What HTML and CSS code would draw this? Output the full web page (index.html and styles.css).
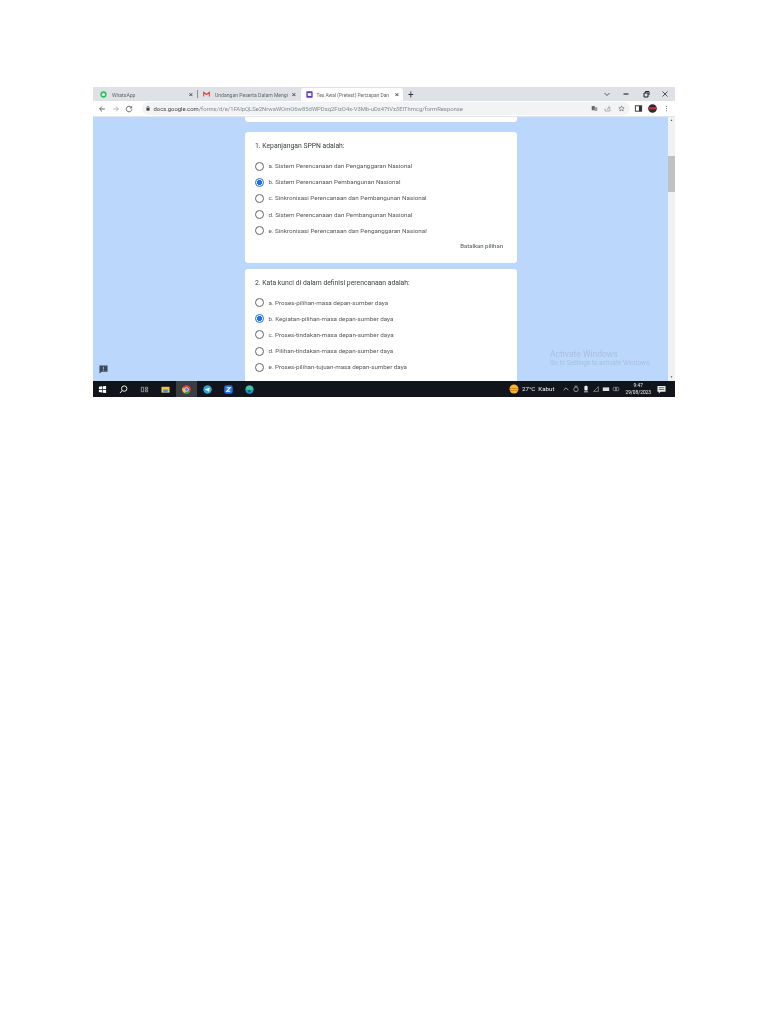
FILE: index.html
```html
<!DOCTYPE html>
<html>
<head>
	<meta charset="utf-8">
	<title>Tes Awal (Pretest) Perizapan Dan</title>
	<link rel="stylesheet" href="styles.css">
</head>
<body>
	<div class="shot">

		<!-- tab strip -->
		<div class="tabstrip">
			<div class="tab">
				<svg class="tab-icon" viewBox="0 0 10 10"><circle cx="5" cy="5" r="4.5" fill="#25c25a"/><circle cx="5" cy="5" r="2.2" fill="#fff"/></svg>
				<span class="tab-title">WhatsApp</span>
				<span class="tab-close">×</span>
			</div>
			<div class="tab-sep"></div>
			<div class="tab">
				<svg class="tab-icon" viewBox="0 0 10 10"><path d="M1 8V2l4 3 4-3v6" fill="none" stroke="#d9453a" stroke-width="1.6"/></svg>
				<span class="tab-title">Undangan Peserta Dalam Mengi</span>
				<span class="tab-close">×</span>
			</div>
			<div class="tab tab-active">
				<svg class="tab-icon" viewBox="0 0 10 10"><rect x="0.5" y="0.5" width="9" height="9" rx="1" fill="#673ab7"/><rect x="2.5" y="3" width="5" height="4" fill="#fff"/></svg>
				<span class="tab-title">Tes Awal (Pretest) Perizapan Dan</span>
				<span class="tab-close">×</span>
			</div>
			<span class="tab-new">+</span>
			<div class="win-controls">
				<svg viewBox="0 0 10 10"><path d="M2.5 4l2.5 2.5L7.500 4" fill="none" stroke="#555" stroke-width="1"/></svg>
				<svg viewBox="0 0 10 10"><path d="M2.500 5h5" stroke="#333" stroke-width="1.200"/></svg>
				<svg viewBox="0 0 10 10"><path d="M3 4h4v4H3zM4.500 4V2.500h3.500V6" fill="none" stroke="#222" stroke-width="1"/></svg>
				<svg viewBox="0 0 10 10"><path d="M2.500 2.500l5 5M7.500 2.500l-5 5" stroke="#444" stroke-width="0.900"/></svg>
			</div>
		</div>

		<!-- toolbar -->
		<div class="toolbar">
			<svg class="nav-icon" viewBox="0 0 10 10"><path d="M8.500 5H2M5 2L2 5l3 3" fill="none" stroke="#555" stroke-width="1.100"/></svg>
			<svg class="nav-icon" viewBox="0 0 10 10"><path d="M1.500 5H8M5 2l3 3-3 3" fill="none" stroke="#aaa" stroke-width="1.100"/></svg>
			<svg class="nav-icon" viewBox="0 0 10 10"><path d="M8 3.200A3.500 3.500 0 1 0 8.500 5.500M8.300 1.500v2.200H6" fill="none" stroke="#555" stroke-width="1.100"/></svg>
			<div class="omnibox">
				<svg class="lock" viewBox="0 0 6 8"><rect x="0.500" y="3" width="5" height="4.500" fill="#444"/><path d="M1.500 3V2a1.500 1.500 0 0 1 3 0v1" fill="none" stroke="#444"/></svg>
				<span class="url"><span class="url-host">docs.google.com</span>/forms/d/e/1FAIpQLSe2NrwaWOmO6w85dWPDsq2FizO4x-V3Mb-uDz47tVz3EIThmcg/formResponse</span>
				<div class="omni-icons">
					<svg viewBox="0 0 10 10"><rect x="1" y="1.500" width="4.500" height="6" fill="#666"/><rect x="5" y="3" width="4" height="5.500" fill="#9aa0a6"/></svg>
					<svg viewBox="0 0 10 10"><path d="M1.500 5v3.500h7V5M5 6.500c0-2 1-3 3-3M6.500 1.500l2 2-2 2" fill="none" stroke="#777" stroke-width="0.800"/></svg>
					<svg viewBox="0 0 10 10"><path d="M5 1.200l1.100 2.500 2.700.3-2 1.800.6 2.700L5 7.100 2.600 8.500l.6-2.700-2-1.800 2.700-.3z" fill="none" stroke="#555" stroke-width="0.800"/></svg>
				</div>
			</div>
			<div class="tool-icons">
				<svg viewBox="0 0 10 10"><rect x="1.500" y="2" width="7" height="6" fill="none" stroke="#333" stroke-width="1"/><rect x="5.500" y="2" width="3" height="6" fill="#333"/></svg>
				<svg viewBox="0 0 10 10"><circle cx="5" cy="5" r="4.800" fill="#2a2c33"/><rect x="0.500" y="3.500" width="9" height="2.500" fill="#c62f3b"/></svg>
				<svg viewBox="0 0 10 10"><circle cx="5" cy="2.500" r="0.600" fill="#555"/><circle cx="5" cy="5" r="0.600" fill="#555"/><circle cx="5" cy="7.500" r="0.600" fill="#555"/></svg>
			</div>
		</div>

		<!-- form page -->
		<div class="viewport">
			<div class="page">
				<div class="form">
					<div class="card card-stub"></div>

					<div class="card card-first">
						<div class="question">1. Kepanjangan SPPN adalah:</div>
						<div class="options">
							<div class="option"><span class="radio"></span>a. Sistem Perencanaan dan Penganggaran Nasional</div>
							<div class="option"><span class="radio radio-on"></span>b. Sistem Perencanaan Pembangunan Nasional</div>
							<div class="option"><span class="radio"></span>c. Sinkronisasi Perencanaan dan Pembangunan Nasional</div>
							<div class="option"><span class="radio"></span>d. Sistem Perencanaan dan Pembangunan Nasional</div>
							<div class="option"><span class="radio"></span>e. Sinkronisasi Perencanaan dan Penganggaran Nasional</div>
						</div>
						<div class="clear">Batalkan pilihan</div>
					</div>

					<div class="card card-second">
						<div class="question">2. Kata kunci di dalam definisi perencanaan adalah:</div>
						<div class="options">
							<div class="option"><span class="radio"></span>a. Proses-pilihan-masa depan-sumber daya</div>
							<div class="option"><span class="radio radio-on"></span>b. Kegiatan-pilihan-masa depan-sumber daya</div>
							<div class="option"><span class="radio"></span>c. Proses-tindakan-masa depan-sumber daya</div>
							<div class="option"><span class="radio"></span>d. Pilihan-tindakan-masa depan-sumber daya</div>
							<div class="option"><span class="radio"></span>e. Proses-pilihan-tujuan-masa depan-sumber daya</div>
						</div>
					</div>
				</div>

				<svg class="feedback" viewBox="0 0 10 10"><path d="M0.500 0.500h9v7H3L0.500 9.500z" fill="#3f4a5a"/><path d="M5 2v3M5 5.800v.8" stroke="#bbd7fb" stroke-width="0.800"/></svg>
				<div class="watermark">
					<div class="watermark-title">Activate Windows</div>
					<div class="watermark-sub">Go to Settings to activate Windows.</div>
				</div>
			</div>
			<div class="scrollbar">
				<span class="scroll-arrow">▲</span>
				<div class="scroll-thumb"></div>
				<span class="scroll-arrow">▼</span>
			</div>
		</div>

		<!-- windows taskbar -->
		<div class="taskbar">
			<div class="task-left">
				<svg class="task-icon" viewBox="0 0 10 10"><path d="M1 2l3.500-.5v3H1zM5.200 1.400L9 1v3.500H5.200zM1 5.300h3.500v3L1 7.900zM5.200 5.300H9V9l-3.800-.5z" fill="#fff"/></svg>
				<svg class="task-icon" viewBox="0 0 10 10"><circle cx="5.800" cy="4" r="3" fill="none" stroke="#fff" stroke-width="1"/><path d="M3.600 6.200L1 9" stroke="#fff" stroke-width="1"/></svg>
				<svg class="task-icon" viewBox="0 0 10 10"><path d="M1.500 2.500h2.500v5H1.500zM6 2.500h2.500v2H6zM6 5.500h2.500v2H6z" fill="none" stroke="#ccc" stroke-width="0.700"/></svg>
				<svg class="task-icon" viewBox="0 0 10 10"><rect x="0.500" y="2" width="9" height="6.500" fill="#f5c344"/><rect x="2.500" y="5" width="5" height="3.500" fill="#3c8fd6"/></svg>
				<span class="task-active">
					<svg class="task-icon" viewBox="0 0 10 10"><circle cx="5" cy="5" r="4.700" fill="#e0453a"/><path d="M5 5L9 7.500A4.700 4.700 0 0 1 3 9.300z" fill="#2fa44f"/><path d="M5 5L3 9.300A4.700 4.700 0 0 1 .8 2.800z" fill="#f3c02e"/><circle cx="5" cy="5" r="2.100" fill="#3f83e8" stroke="#fff" stroke-width="0.700"/></svg>
				</span>
				<svg class="task-icon" viewBox="0 0 10 10"><circle cx="5" cy="5" r="4.700" fill="#2ea3dc"/><path d="M2 5l5.500-2.200L6.700 7.500 4.500 6z" fill="#fff"/></svg>
				<svg class="task-icon" viewBox="0 0 10 10"><rect x="0.300" y="0.300" width="9.400" height="9.400" rx="2.500" fill="#2470e8"/><path d="M3 3h4L3 7h4" fill="none" stroke="#fff" stroke-width="1.200"/></svg>
				<svg class="task-icon" viewBox="0 0 10 10"><circle cx="5" cy="5" r="4.700" fill="#1f8fd0"/><path d="M1 5a4 4 0 0 1 8-.5C9 6 6 6 5 5.500 3.500 5 2 5 1 5z" fill="#3ecb8e"/><circle cx="4.800" cy="6.800" r="1.500" fill="#0e4f8f"/></svg>
			</div>
			<div class="task-right">
				<svg class="weather" viewBox="0 0 10 10"><circle cx="5" cy="5" r="4.500" fill="#f6b52c"/><path d="M1 4.500h8M1 6.500h8" stroke="#d9791c" stroke-width="0.800"/></svg>
				<span class="weather-text">27°C&nbsp; Kabut</span>
				<div class="tray">
					<svg viewBox="0 0 10 10"><path d="M2 6.500L5 3.500l3 3" fill="none" stroke="#ddd" stroke-width="0.900"/></svg>
					<svg viewBox="0 0 10 10"><circle cx="5" cy="5.500" r="2.800" fill="none" stroke="#ccc" stroke-width="0.800"/><path d="M3 1.500h4" stroke="#ccc" stroke-width="0.800"/></svg>
					<svg viewBox="0 0 10 10"><rect x="3" y="1" width="4" height="6" rx="1.500" fill="#eee"/><path d="M2.500 8.500h5" stroke="#eee"/></svg>
					<svg viewBox="0 0 10 10"><path d="M2 8h6V2z" fill="none" stroke="#aaa" stroke-width="0.800"/></svg>
					<svg viewBox="0 0 10 10"><rect x="1" y="3" width="8" height="4.500" fill="#ddd"/></svg>
					<svg viewBox="0 0 10 10"><circle cx="3.500" cy="5" r="2.300" fill="none" stroke="#bbb" stroke-width="0.700"/><circle cx="6.500" cy="5" r="2.300" fill="none" stroke="#bbb" stroke-width="0.700"/></svg>
				</div>
				<div class="clock">
					<div>9:47</div>
					<div>29/08/2023</div>
				</div>
				<svg class="notify" viewBox="0 0 10 10"><path d="M0.500 1h9v6.500H4L2 9.500v-2H0.500z" fill="#e8e8e8"/><path d="M2 3h6M2 5h6" stroke="#333" stroke-width="0.700"/></svg>
			</div>
		</div>
	</div>
</body>
</html>
```

FILE: styles.css
```css
html, body {
	margin: 0;
	background: #fff;
}

body {
	padding: 87px 93px 0 93px;
	height: 1024px;
	box-sizing: border-box;
	font-family: "Roboto", "Liberation Sans", sans-serif;
}

/* the whole picture is a scaled down screenshot, so everything is a bit soft */
.shot {
	width: 582px;
	height: 310px;
	display: flex;
	flex-direction: column;
	filter: blur(0.55px);
	overflow: hidden;
}

/* tab strip */
.tabstrip {
	height: 14px;
	background: #dee1e6;
	display: flex;
	align-items: flex-end;
	padding-left: 2px;
	font-size: 5.100px;
	color: #666;
}

.tab {
	width: 102px;
	height: 13px;
	display: flex;
	align-items: center;
	padding: 0 4px 0 5px;
	box-sizing: border-box;
	gap: 5px;
	border-radius: 3px 3px 0 0;
}

.tab-active {
	background: #fff;
	margin-left: 1px;
	gap: 3.500px;
	font-size: 4.900px;
}

.tab-icon {
	width: 7px;
	height: 7px;
	flex: none;
}

.tab-title {
	flex: 1;
	min-width: 0;
	white-space: nowrap;
}

.tab-close {
	font-size: 8px;
	color: #444;
	line-height: 1;
}

.tab-sep {
	width: 1px;
	height: 8px;
	background: #8a8d93;
	align-self: center;
	flex: none;
}

.tab-new {
	margin-left: 5px;
	font-size: 10px;
	line-height: 13px;
	color: #333;
}

.win-controls {
	margin-left: auto;
	display: flex;
	align-items: center;
	height: 14px;
	gap: 9.500px;
	padding-right: 5px;
}

.win-controls svg {
	width: 10px;
	height: 10px;
}

/* toolbar */
.toolbar {
	height: 16px;
	background: #fff;
	display: flex;
	align-items: center;
	padding-left: 5px;
	box-sizing: border-box;
	border-bottom: 1px solid #e3e5e8;
}

.nav-icon {
	width: 8px;
	height: 8px;
	margin-right: 5.500px;
	flex: none;
}

.omnibox {
	margin-left: 3px;
	width: 488px;
	height: 13px;
	border-radius: 7px;
	background: #f1f3f4;
	display: flex;
	align-items: center;
	padding-left: 4px;
	box-sizing: border-box;
	flex: none;
}

.lock {
	width: 4px;
	height: 5px;
	margin-right: 4px;
}

.url {
	font-size: 5.870px;
	color: #85898f;
	white-space: nowrap;
}

.url-host {
	color: #3c4043;
}

.omni-icons {
	margin-left: auto;
	display: flex;
	gap: 6.500px;
	padding-right: 5px;
}

.omni-icons svg {
	width: 7px;
	height: 7px;
}

.tool-icons {
	display: flex;
	align-items: center;
	gap: 5px;
	margin-left: 4px;
}

.tool-icons svg {
	width: 9px;
	height: 9px;
}

/* form page */
.viewport {
	height: 264px;
	display: flex;
	background: #bbd7fb;
}

.page {
	flex: 1;
	position: relative;
	overflow: hidden;
}

.form {
	width: 272px;
	margin-left: 152px;
	display: flex;
	flex-direction: column;
}

.card {
	background: #fff;
	border-radius: 3px;
	padding: 0 10px;
	box-sizing: border-box;
}

.card-stub {
	height: 5px;
	border-radius: 0 0 3px 3px;
	margin-bottom: 10px;
}

.card-first {
	height: 131px;
	margin-bottom: 6px;
	padding-top: 10px;
}

.card-second {
	height: 130px;
	padding-top: 10px;
}

.question {
	font-size: 6.800px;
	line-height: 9px;
	color: #3c4043;
}

.options {
	margin-top: 7px;
}

.card-second .options {
	margin-top: 6.500px;
}

.option {
	height: 16.200px;
	display: flex;
	align-items: center;
	font-size: 6.250px;
	color: #55585c;
	white-space: nowrap;
}

.radio {
	width: 9px;
	height: 9px;
	border: 1px solid #5f6368;
	border-radius: 50%;
	box-sizing: border-box;
	margin-right: 4.500px;
	flex: none;
}

.radio-on {
	border-color: #1a73e8;
	background: radial-gradient(circle, #1a73e8 0, #1a73e8 2.300px, #fff 2.800px);
}

.clear {
	text-align: right;
	font-size: 6px;
	font-weight: 500;
	color: #6b6f74;
	margin-top: 3.500px;
	padding-right: 4px;
}

.feedback {
	position: absolute;
	left: 6px;
	top: 248px;
	width: 9px;
	height: 9px;
}

.watermark {
	position: absolute;
	left: 457px;
	top: 232px;
	color: #a9bfdd;
	white-space: nowrap;
}

.watermark-title {
	font-size: 8.500px;
	line-height: 10px;
}

.watermark-sub {
	font-size: 6.400px;
	line-height: 8px;
}

.scrollbar {
	width: 7px;
	background: #f1f1f1;
	display: flex;
	flex-direction: column;
	align-items: center;
	font-size: 3px;
	color: #555;
}

.scroll-arrow {
	height: 7px;
	line-height: 7px;
}

.scroll-thumb {
	width: 100%;
	height: 36px;
	margin-top: 32px;
	margin-bottom: auto;
	background: #c1c1c1;
}

/* windows taskbar */
.taskbar {
	height: 16px;
	background: #11141a;
	display: flex;
	justify-content: space-between;
	align-items: center;
	color: #eee;
}

.task-left {
	display: flex;
	align-items: center;
	padding-left: 5px;
	gap: 12px;
}

.task-icon {
	width: 9px;
	height: 9px;
	display: block;
}

.task-active {
	background: #3a3d42;
	height: 16px;
	padding: 0 6px;
	display: flex;
	align-items: center;
	margin: 0 -6px;
}

.task-right {
	display: flex;
	align-items: center;
}

.weather {
	width: 10px;
	height: 10px;
	margin-right: 3px;
}

.weather-text {
	font-size: 6.200px;
	margin-right: 8px;
	white-space: nowrap;
}

.tray {
	display: flex;
	gap: 2px;
	margin-right: 5px;
}

.tray svg {
	width: 8px;
	height: 8px;
}

.clock {
	font-size: 4.800px;
	line-height: 7px;
	text-align: center;
	margin-right: 6px;
	white-space: nowrap;
}

.notify {
	width: 9px;
	height: 9px;
	margin-right: 9px;
}
```
